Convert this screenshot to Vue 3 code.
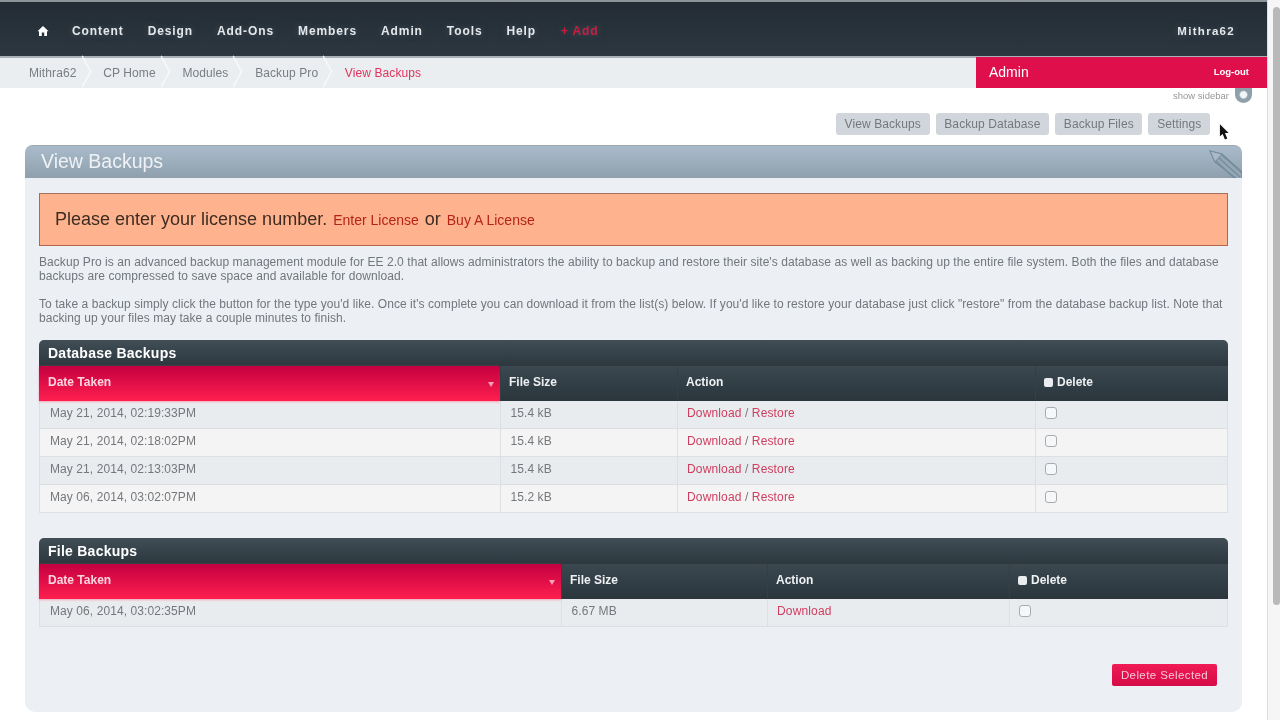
<script setup>
const navItems = ['Content', 'Design', 'Add-Ons', 'Members', 'Admin', 'Tools', 'Help']
const crumbs = ['Mithra62', 'CP Home', 'Modules', 'Backup Pro']
const tabs = ['View Backups', 'Backup Database', 'Backup Files', 'Settings']

const tables = [
  {
    title: 'Database Backups',
    cols: [461, 177, 358, 193],
    rows: [
      { date: 'May 21, 2014, 02:19:33PM', size: '15.4 kB', restore: true },
      { date: 'May 21, 2014, 02:18:02PM', size: '15.4 kB', restore: true },
      { date: 'May 21, 2014, 02:13:03PM', size: '15.4 kB', restore: true },
      { date: 'May 06, 2014, 03:02:07PM', size: '15.2 kB', restore: true }
    ]
  },
  {
    title: 'File Backups',
    cols: [522, 206, 242, 219],
    rows: [
      { date: 'May 06, 2014, 03:02:35PM', size: '6.67 MB', restore: false }
    ]
  }
]
</script>

<template>
  <div class="app">
    <div class="page">
      <header class="topnav">
        <svg class="home" viewBox="0 0 12 12" width="12" height="12">
          <path d="M6 1 L11.5 6.2 H10 V11 H7.2 V7.6 H4.8 V11 H2 V6.2 H.5 Z" fill="#fff" />
        </svg>
        <a v-for="item in navItems" :key="item" class="nav-link">{{ item }}</a>
        <a class="nav-add">+ Add</a>
        <span class="nav-user">Mithra62</span>
      </header>

      <div class="subbar">
        <nav class="crumbs">
          <a v-for="c in crumbs" :key="c" class="crumb">{{ c }}</a>
          <span class="crumb-current">View Backups</span>
        </nav>
        <div class="admin-bar">
          <span class="admin-title">Admin</span>
          <a class="logout">Log-out</a>
        </div>
      </div>

      <div class="sidebar-toggle">
        <span class="toggle-text">show sidebar</span>
        <span class="toggle-icon"></span>
      </div>

      <div class="tabs">
        <a v-for="t in tabs" :key="t" class="tab">{{ t }}</a>
      </div>

      <main class="panel">
        <div class="panel-title">
          <h1>View Backups</h1>
          <svg class="pencil" viewBox="0 0 34 30" width="34" height="30">
            <path d="M2 2 L14 5 L34 23 V30 H29 L7 13 Z" fill="#93a7b5" stroke="#748c9c" stroke-width="1.2" />
            <path d="M2 2 L14 5 L7 13 Z" fill="#a9bac6" stroke="#748c9c" stroke-width="1" />
            <path d="M11 9 L32 28 M8 12 L26 29 M14 6 L34 24" stroke="#748c9c" stroke-width="1.2" fill="none" />
          </svg>
        </div>

        <div class="panel-body">
          <div class="license">
            <span class="license-big">Please enter your license number.</span>
            <a class="license-link">Enter License</a>
            <span class="license-big">or</span>
            <a class="license-link">Buy A License</a>
          </div>

          <p class="intro">Backup Pro is an advanced backup management module for EE 2.0 that allows administrators the ability to backup and restore their site's database as well as backing up the entire file system. Both the files and database backups are compressed to save space and available for download.</p>
          <p class="intro">To take a backup simply click the button for the type you'd like. Once it's complete you can download it from the list(s) below. If you'd like to restore your database just click "restore" from the database backup list. Note that backing up your files may take a couple minutes to finish.</p>

          <section v-for="table in tables" :key="table.title" class="backup-block">
            <div class="block-title">{{ table.title }}</div>
            <table class="backup-table">
              <colgroup>
                <col v-for="(w, i) in table.cols" :key="i" :style="{ width: w + 'px' }" />
              </colgroup>
              <thead>
                <tr>
                  <th class="sorted">Date Taken<span class="sort-arrow"></span></th>
                  <th>File Size</th>
                  <th>Action</th>
                  <th class="th-delete"><span class="check-all"></span>Delete</th>
                </tr>
              </thead>
              <tbody>
                <tr v-for="row in table.rows" :key="row.date">
                  <td class="td-date">{{ row.date }}</td>
                  <td>{{ row.size }}</td>
                  <td class="td-action">
                    <a>Download</a>
                    <template v-if="row.restore"> / <a>Restore</a></template>
                  </td>
                  <td class="td-check"><span class="checkbox"></span></td>
                </tr>
              </tbody>
            </table>
          </section>

          <div class="actions">
            <button class="delete-btn">Delete Selected</button>
          </div>
        </div>
      </main>

      <svg class="cursor" viewBox="0 0 12 18" width="11" height="17">
        <path d="M1 0 V13 L4 10.5 L6.5 16.5 L9 15.5 L6.5 9.5 H10.5 Z" fill="#111" />
      </svg>
    </div>

    <aside class="scrollbar"><div class="scroll-thumb"></div></aside>
  </div>
</template>

<style>
html, body {
  margin: 0;
  background: #fff;
  overflow: hidden;
}
</style>

<style scoped>
.app {
  display: flex;
  width: 1280px;
  height: 720px;
  overflow: hidden;
  font-family: "Liberation Sans", Arial, sans-serif;
  background: #fff;
  filter: blur(0.35px);
}

.page {
  position: relative;
  width: 1267px;
  flex: none;
}

.scrollbar {
  flex: 1;
  background: #f6f6f6;
  border-left: 1px solid #dedede;
  padding: 7px 0 0 5px;
}

.scroll-thumb {
  width: 7px;
  height: 598px;
  border-radius: 4px;
  background: #b9b9b9;
}

/* top nav */
.topnav {
  display: flex;
  align-items: center;
  height: 50px;
  padding: 4px 0 0 37px;
  border-top: 2px solid #8c9499;
  background: linear-gradient(#232c34, #2c3740);
  color: #fff;
  font-size: 12px;
  font-weight: bold;
  letter-spacing: 0.9px;
  text-shadow: 0 0 6px #45525c;
}

.home {
  margin-right: 23px;
}

.nav-link {
  margin-right: 24px;
  color: #e4e8eb;
}

.nav-add {
  margin-left: 1px;
  color: #cf1a42;
  letter-spacing: 0.8px;
}

.nav-user {
  margin-left: auto;
  margin-right: 32px;
  color: #e4e8eb;
  font-size: 11.5px;
  letter-spacing: 1.3px;
}

/* breadcrumb + admin */
.subbar {
  display: flex;
  height: 32px;
  background: #aab1b6;
}

.crumbs {
  flex: 1;
  display: flex;
  align-items: center;
  height: 30px;
  margin-top: 2px;
  padding-left: 29px;
  background: #ebeef1;
  font-size: 12px;
  letter-spacing: 0.1px;
  color: #777d83;
}

.crumb {
  position: relative;
  margin-right: 26.7px;
}

.crumb::after {
  content: "";
  position: absolute;
  top: -6px;
  right: -17px;
  width: 21px;
  height: 21px;
  border-top: 2px solid #f8f9fa;
  border-right: 2px solid #f8f9fa;
  transform: scaleX(0.55) rotate(45deg);
}

.crumb-current {
  color: #e0335e;
}

.admin-bar {
  display: flex;
  align-items: center;
  justify-content: space-between;
  width: 291px;
  padding: 0 18px 2px 13px;
  box-sizing: border-box;
  background: #de0f4b;
  color: #fff;
  margin-top: 1px;
}

.admin-title {
  font-size: 14px;
}

.logout {
  font-size: 9.5px;
  font-weight: bold;
}

/* sidebar toggle */
.sidebar-toggle {
  display: flex;
  justify-content: flex-end;
  align-items: flex-start;
  height: 25px;
  padding-right: 15px;
}

.toggle-text {
  margin-top: 2px;
  margin-right: 6px;
  font-size: 9.5px;
  color: #94989c;
}

.toggle-icon {
  width: 17px;
  height: 15px;
  border-radius: 0 0 9px 9px;
  background: radial-gradient(circle at 50% 45%, #f2f5f6 0 3px, #8fa0ab 4.5px);
}

/* tabs */
.tabs {
  display: flex;
  justify-content: flex-end;
  gap: 6px;
  height: 22px;
  margin-bottom: 10px;
  padding-right: 57px;
}

.tab {
  display: flex;
  align-items: center;
  padding: 0 8.7px;
  border-radius: 3px;
  background: #d0d6db;
  color: #72787e;
  font-size: 12px;
  letter-spacing: 0.1px;
}

/* panel */
.panel {
  margin-left: 25px;
  width: 1217px;
}

.panel-title {
  position: relative;
  height: 33px;
  overflow: hidden;
  border-radius: 8px 8px 0 0;
  background: linear-gradient(#a9bbcb, #8f9fac);
  border-top: 1px solid #9da8ad;
  box-sizing: border-box;
}

.panel-title h1 {
  margin: 0;
  padding: 3px 0 0 16px;
  font-size: 19.5px;
  line-height: 24px;
  font-weight: normal;
  color: #eef2f6;
}

.pencil {
  position: absolute;
  top: 3px;
  right: 0;
}

.panel-body {
  height: 534px;
  box-sizing: border-box;
  padding: 15px 14px 0;
  border-radius: 0 0 10px 10px;
  background: #eceff3;
}

.license {
  display: flex;
  align-items: center;
  gap: 6px;
  height: 53px;
  box-sizing: border-box;
  padding-left: 15px;
  margin-bottom: 9px;
  border: 1px solid #b5654c;
  border-top-color: #a8705a;
  background: #ffb28e;
}

.license-big {
  font-size: 18px;
  color: #3c2c22;
}

.license-link {
  font-size: 14px;
  color: #b5231b;
}

.intro {
  margin: 0 0 14px;
  font-size: 12px;
  letter-spacing: 0.065px;
  line-height: 14px;
  color: #72777c;
}

.intro + .intro {
  margin-bottom: 15px;
}

/* backup tables */
.backup-block {
  margin-bottom: 25px;
}

.block-title {
  height: 26px;
  padding: 1px 0 0 9px;
  box-sizing: border-box;
  border-radius: 5px 5px 0 0;
  background: linear-gradient(#414e55, #2c373e);
  color: #fff;
  font-size: 14px;
  font-weight: bold;
  letter-spacing: 0.25px;
  line-height: 25px;
}

.backup-table {
  width: 1189px;
  table-layout: fixed;
  border-collapse: separate;
  border-spacing: 0;
}

.backup-table th {
  position: relative;
  height: 35px;
  padding: 0 0 4px 8px;
  box-sizing: border-box;
  text-align: left;
  font-size: 12px;
  color: #eef1f3;
  background: linear-gradient(#3b484f, #2a353c);
  border-left: 1px solid #333f46;
}

.backup-table th.sorted {
  padding-left: 9px;
  border-left: 0;
  color: #ffd5df;
  background: linear-gradient(#c30040, #ff1f4f);
  box-shadow: 0 1px 2px #f7a3b8;
}

.sort-arrow {
  position: absolute;
  right: 6px;
  top: 16px;
  border-left: 3px solid transparent;
  border-right: 3px solid transparent;
  border-top: 5px solid #f9a3b9;
}

.th-delete .check-all {
  display: inline-block;
  width: 9px;
  height: 9px;
  margin-right: 4px;
  border-radius: 2px;
  background: #e9edef;
  vertical-align: -1px;
}

.backup-table td {
  height: 28px;
  padding: 0 0 3px 9.5px;
  box-sizing: border-box;
  border-left: 1px solid #dcdfe3;
  border-bottom: 1px solid #dcdfe3;
  color: #74787c;
  font-size: 12px;
  letter-spacing: 0.08px;
}

.backup-table td.td-date {
  padding-left: 10px;
}

.backup-table tbody tr {
  background: #e9ecef;
}

.backup-table tbody tr:nth-child(even) {
  background: #f4f4f5;
}

.td-action,
.td-action a {
  color: #cf3d5f;
  letter-spacing: 0.15px;
}

.backup-table td.td-action {
  padding-left: 9px;
}

.backup-table td.td-check {
  padding-left: 9px;
  border-right: 1px solid #dcdfe3;
}

.checkbox {
  display: block;
  width: 10px;
  height: 10px;
  border: 1px solid #a8acb0;
  border-radius: 3px;
  background: #f6f7f8;
}

.actions {
  display: flex;
  justify-content: flex-end;
  margin-top: 37px;
  padding-right: 11px;
}

.delete-btn {
  width: 105px;
  height: 22px;
  padding: 0;
  border: 0;
  border-radius: 2px;
  background: linear-gradient(#f01a56, #d60b47);
  color: #f6c9d5;
  font-family: inherit;
  font-size: 11.5px;
  letter-spacing: 0.4px;
}

.cursor {
  position: absolute;
  top: 124px;
  left: 1219px;
}
</style>
